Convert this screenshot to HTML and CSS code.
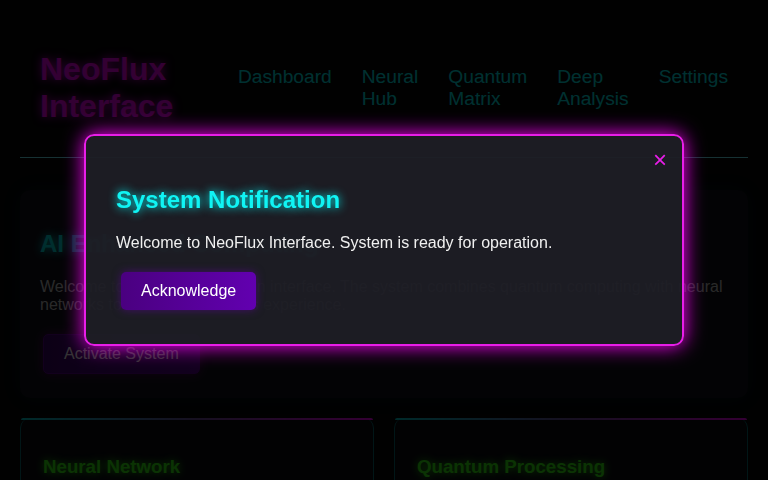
FILE: index.html
```html
<!DOCTYPE html>
<html lang="en">
<head>
<meta charset="utf-8">
<title>NeoFlux Interface</title>
<link rel="stylesheet" href="styles.css">
</head>
<body>
  <header class="site-header">
    <h1 class="logo">NeoFlux Interface</h1>
    <nav class="nav">
      <ul class="nav-list">
        <li><a class="nav-link" href="#">Dashboard</a></li>
        <li><a class="nav-link" href="#">Neural Hub</a></li>
        <li><a class="nav-link" href="#">Quantum Matrix</a></li>
        <li><a class="nav-link" href="#">Deep Analysis</a></li>
        <li><a class="nav-link" href="#">Settings</a></li>
      </ul>
    </nav>
  </header>

  <main class="main">
    <section class="hero">
      <h2 class="hero-title">AI Enhanced Computing</h2>
      <p class="hero-text">Welcome to the next generation interface. The system combines quantum computing with neural networks to deliver a seamless experience.</p>
      <div><button class="btn btn-activate">Activate System</button></div>
    </section>

    <section class="cards">
      <article class="card">
        <h3 class="card-title">Neural Network</h3>
        <p class="card-text">Adaptive deep learning layers process incoming data streams in real time.</p>
      </article>
      <article class="card">
        <h3 class="card-title">Quantum Processing</h3>
        <p class="card-text">Qubit arrays accelerate complex computations beyond classical limits.</p>
      </article>
    </section>
  </main>

  <div class="overlay">
    <div class="modal">
      <button class="modal-close" aria-label="Close">×</button>
      <h2 class="modal-title">System Notification</h2>
      <p class="modal-text">Welcome to NeoFlux Interface. System is ready for operation.</p>
      <div><button class="btn btn-ack">Acknowledge</button></div>
    </div>
  </div>
</body>
</html>
```

FILE: styles.css
```css
* { box-sizing: border-box; }

html, body { height: 100%; }

body {
  margin: 0;
  padding: 20px;
  background: #050507;
  color: #cccccc;
  font-family: "Liberation Sans", Arial, sans-serif;
  font-size: 16px;
  overflow: hidden;
}

.site-header {
  display: flex;
  justify-content: space-between;
  align-items: center;
  padding: 10px 20px;
  border-bottom: 1px solid #70f4ff;
}

.logo {
  margin: 0.67em 0;
  font-size: 32px;
  font-weight: bold;
  color: #ff00ff;
  text-shadow: 0 0 10px #ff00ff;
}

.nav-list {
  display: flex;
  gap: 30px;
  list-style: none;
  margin: 0;
  padding: 0;
}

.nav-link {
  color: #00f0f0;
  text-decoration: none;
  font-size: 19.2px;
}

.main {
  margin-top: 32px;
}

.hero {
  padding: 20px;
  border-radius: 10px;
  background: rgba(22, 22, 34, 0.7);
  box-shadow: 0 0 20px rgba(0, 255, 255, 0.08);
}

.hero-title {
  margin: 19.92px 0;
  font-size: 24px;
  color: #00e5e5;
  text-shadow: 0 0 10px #00ffff;
}

.hero-text {
  margin: 19.92px 0 16px;
  color: #cccccc;
}

.btn {
  display: inline-block;
  margin: 4px;
  padding: 10px 20px;
  border: none;
  border-radius: 5px;
  color: #ffffff;
  font-family: "Liberation Sans", Arial, sans-serif;
  font-size: 16px;
  cursor: pointer;
}

.btn-activate {
  margin: 4px 3px;
  border: 1px solid #5a0090;
  background: linear-gradient(90deg, #3e006e, #5a0096);
  box-shadow: 0 0 12px rgba(255, 0, 255, 0.3);
}

.cards {
  display: grid;
  grid-template-columns: 1fr 1fr;
  gap: 20px;
  margin-top: 20px;
}

.card {
  position: relative;
  padding: 20px 20px 20px 22px;
  border-radius: 10px;
  border: 1px solid rgba(0, 210, 210, 0.5);
  border-top: none;
  background: rgba(12, 12, 20, 0.9);
}

.card::before {
  content: "";
  position: absolute;
  top: 0;
  left: 0;
  right: 0;
  height: 2px;
  border-radius: 10px 10px 0 0;
  background: linear-gradient(90deg, #00d0d0, #7050a0, #ff00ff);
}

.card-title {
  margin: 18.72px 0;
  font-size: 18.72px;
  color: #39ff14;
  text-shadow: 0 0 8px #39ff14;
}

.card-text {
  margin: 0;
  color: #cccccc;
}

.overlay {
  position: fixed;
  inset: 0;
  display: flex;
  align-items: center;
  justify-content: center;
  background: rgba(0, 0, 0, 0.8);
}

.modal {
  position: relative;
  width: 600px;
  padding: 30px;
  border: 2px solid #e81ee8;
  border-radius: 10px;
  background: rgba(30, 30, 38, 0.93);
  box-shadow: 0 0 20px #ff00ff;
}

.modal-close {
  position: absolute;
  top: 12px;
  right: 15px;
  padding: 0;
  border: none;
  background: none;
  color: #e81ee8;
  font-family: "Liberation Sans", Arial, sans-serif;
  font-size: 24px;
  line-height: 1;
  cursor: pointer;
}

.modal-title {
  margin: 19.92px 0;
  font-size: 24px;
  color: #10f4f4;
  text-shadow: 0 0 10px #00ffff;
}

.modal-text {
  margin: 19.92px 0 16px;
  color: #f0f0f0;
}

.btn-ack {
  margin: 4px 5px;
  background: linear-gradient(90deg, #4a0080, #6200b0);
  box-shadow: 0 0 8px rgba(106, 0, 176, 0.5);
}
```
